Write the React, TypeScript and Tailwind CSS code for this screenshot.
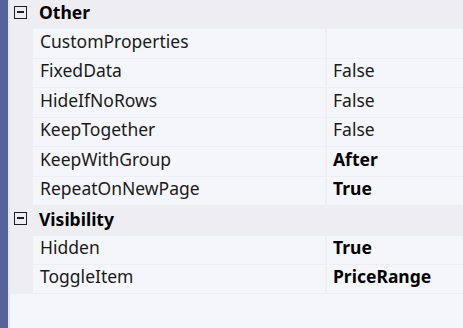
import React from 'react';

type Row = { name: string; value?: string; bold?: boolean };

const groups: { title: string; rows: Row[] }[] = [
  {
    title: 'Other',
    rows: [
      { name: 'CustomProperties' },
      { name: 'FixedData', value: 'False' },
      { name: 'HideIfNoRows', value: 'False' },
      { name: 'KeepTogether', value: 'False' },
      { name: 'KeepWithGroup', value: 'After', bold: true },
      { name: 'RepeatOnNewPage', value: 'True', bold: true },
    ],
  },
  {
    title: 'Visibility',
    rows: [
      { name: 'Hidden', value: 'True', bold: true },
      { name: 'ToggleItem', value: 'PriceRange', bold: true },
    ],
  },
];

const MinusBox = () => (
  <div className="w-[13px] h-[13px] border-[1.5px] border-[#1e1e1e] flex items-center justify-center">
    <div className="w-[7px] h-[2px] bg-[#1e1e1e]" />
  </div>
);

export default function App() {
  return (
    <div className="w-[463px] h-[328px] flex bg-[#f5f6fb] overflow-hidden font-['Noto_Sans',sans-serif] text-[17.5px] text-[#1a1a1a]">
      <div className="w-[8px] bg-[#55639a] shrink-0" />
      <div className="w-[2px] bg-[#e6e7ee] shrink-0" />
      <div className="flex-1 flex flex-col">
        {groups.map((g) => (
          <div key={g.title} className="flex flex-col">
            <div className="h-[29.44px] bg-[#eeeef2] flex items-center">
              <div className="w-[23px] flex pl-[4px] pb-[5px]">
                <MinusBox />
              </div>
              <span className="font-bold ml-[6px] leading-none pb-[3px] text-black">{g.title}</span>
            </div>
            {g.rows.map((r) => (
              <div key={r.name} className="h-[29.44px] flex bg-[#eeeef2]">
                <div className="w-[23px] shrink-0" />
                <div className="w-[292px] shrink-0 bg-[#f5f6fb] border-b border-[#eeeef2] flex items-center pl-[7px] pb-[4px] leading-none">
                  {r.name}
                </div>
                <div className="w-[2px] shrink-0" />
                <div className={`flex-1 bg-[#f5f6fb] border-b border-[#eeeef2] flex items-center pl-[6px] pb-[4px] leading-none ${r.bold ? 'font-bold text-black' : ''}`}>
                  {r.value ?? ''}
                </div>
              </div>
            ))}
          </div>
        ))}
      </div>
    </div>
  );
}
